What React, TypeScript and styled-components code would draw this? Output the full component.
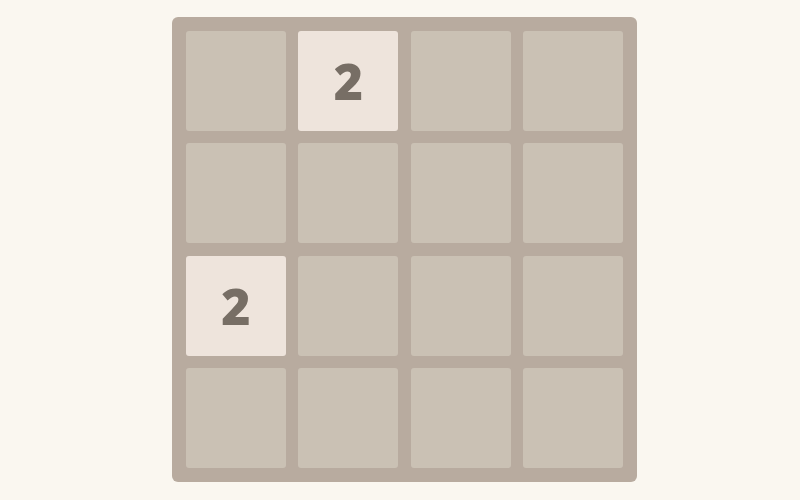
import React from 'react'
import styled, { createGlobalStyle } from 'styled-components'

const GlobalStyle = createGlobalStyle`
  html, body {
    margin: 0;
    padding: 0;
    background: #faf7f0;
  }
  body {
    font-family: 'Open Sans', 'Liberation Sans', sans-serif;
  }
`

const Page = styled.div`
  width: 800px;
  height: 500px;
  display: flex;
  justify-content: center;
  padding-top: 17px;
  padding-left: 9px;
  box-sizing: border-box;
`

const Board = styled.div`
  width: 465px;
  height: 465px;
  box-sizing: border-box;
  padding: 14px;
  background: #b8ab9f;
  border-radius: 6px;
  display: grid;
  grid-template-columns: repeat(4, 1fr);
  grid-template-rows: repeat(4, 1fr);
  gap: 12.67px;
`

const Cell = styled.div<{ $value: number }>`
  border-radius: 3px;
  background: ${(p) => (p.$value ? '#eee4dc' : '#cac1b4')};
  color: #776e65;
  font-size: 50px;
  font-weight: 800;
  display: flex;
  align-items: center;
  justify-content: center;
`

const grid = [
  [0, 2, 0, 0],
  [0, 0, 0, 0],
  [2, 0, 0, 0],
  [0, 0, 0, 0],
]

export default function App() {
  return (
    <>
      <GlobalStyle />
      <Page>
        <Board>
          {grid.flat().map((v, i) => (
            <Cell key={i} $value={v}>
              {v ? v : null}
            </Cell>
          ))}
        </Board>
      </Page>
    </>
  )
}
